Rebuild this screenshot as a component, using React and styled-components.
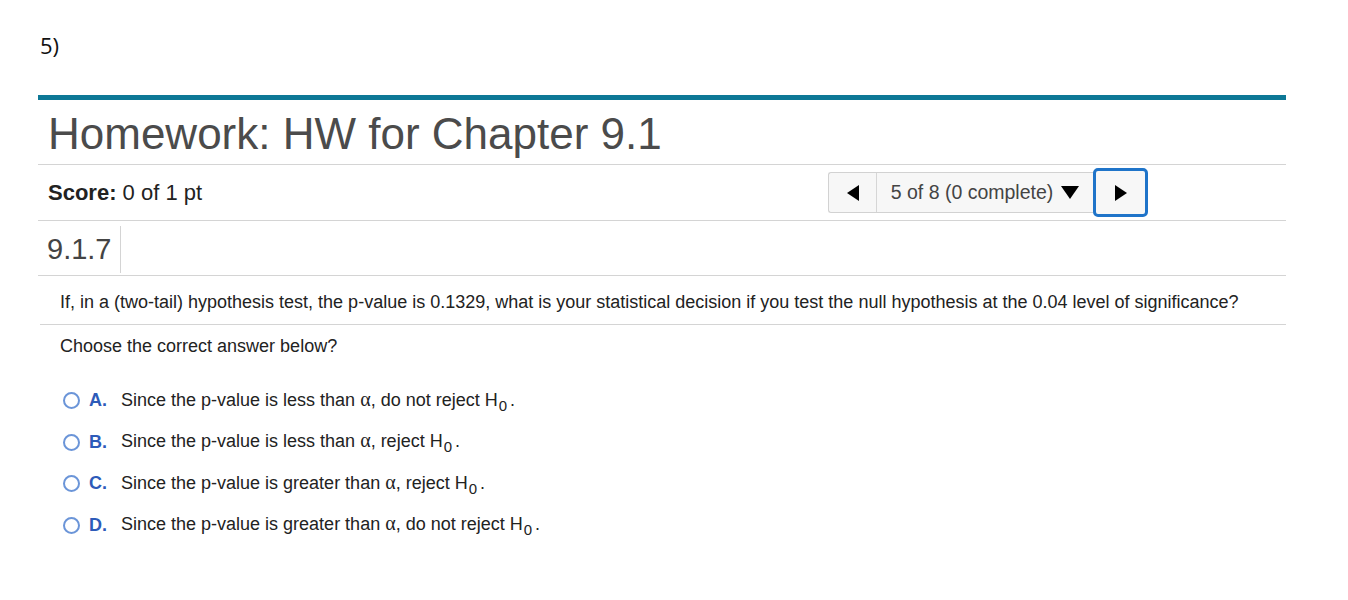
import styled, { createGlobalStyle } from "styled-components"

const GlobalStyle = createGlobalStyle`
  body {
    margin: 0;
    background: #fff;
    font-family: "Liberation Sans", Arial, sans-serif;
    color: #222;
  }
`

const Page = styled.div`
  width: 1348px;
  height: 600px;
  padding: 30px 0 0 38px;
  box-sizing: border-box;
`

const Number = styled.div`
  font-family: "Open Sans", sans-serif;
  font-size: 22px;
  color: #111;
  padding-left: 2px;
  height: 65px;
`

const Panel = styled.div`
  width: 1248px;
  border-top: 5px solid #0d7896;
`

const Title = styled.h1`
  margin: 0;
  font-weight: normal;
  font-size: 44px;
  color: #4b4b4b;
  padding: 5px 0 0 10px;
  height: 59px;
  line-height: 58px;
  border-bottom: 1px solid #d4d4d4;
`

const ScoreRow = styled.div`
  display: flex;
  align-items: center;
  justify-content: space-between;
  height: 55px;
  padding-left: 10px;
  border-bottom: 1px solid #d4d4d4;
  font-size: 22px;
  color: #222;
`

const Nav = styled.div`
  display: flex;
  align-items: center;
  margin-right: 138px;
  height: 41px;
`

const NavBox = styled.div`
  display: flex;
  height: 41px;
  border: 1px solid #d2d2d2;
  border-right: none;
  border-radius: 3px 0 0 3px;
  background: #f7f7f7;
  box-sizing: border-box;
`

const NavButton = styled.div`
  display: flex;
  align-items: center;
  justify-content: center;
  width: ${({ $w }) => $w}px;
  border-right: ${({ $sep }) => ($sep ? "1px solid #d6d6d6" : "none")};
  font-size: 19.5px;
  color: #444;
  gap: 8px;
`

const FocusButton = styled.div`
  display: flex;
  align-items: center;
  justify-content: center;
  width: 55px;
  height: 49px;
  box-sizing: border-box;
  border: 3px solid #1f74c9;
  border-radius: 5px;
  background: #f7f7f7;
`

const IdRow = styled.div`
  display: flex;
  height: 54px;
  border-bottom: 1px solid #d4d4d4;
  padding-left: 9px;
`

const IdText = styled.div`
  font-size: 29px;
  color: #444;
  display: flex;
  align-items: center;
  padding-right: 8px;
  margin: 5px 0 2px;
  border-right: 1px solid #d4d4d4;
`

const Question = styled.div`
  padding: 16px 0 0 20px;
  margin-left: 2px;
  height: 32px;
  font-size: 18px;
  color: #222;
  border-bottom: 1px solid #d4d4d4;
`

const Prompt = styled.div`
  padding: 11px 0 0 22px;
  font-size: 18px;
  color: #222;
  height: 54px;
`

const Options = styled.div`
  display: flex;
  flex-direction: column;
  gap: 20px;
  padding-left: 25px;
`

const Option = styled.div`
  display: flex;
  align-items: center;
  font-size: 18px;
  color: #222;
  height: 21.5px;
`

const Radio = styled.span`
  width: 13px;
  height: 13px;
  border: 2px solid #6b95d8;
  border-radius: 50%;
  margin-right: 9px;
  flex-shrink: 0;
`

const Letter = styled.span`
  font-weight: bold;
  color: #2d5bb9;
  width: 32px;
`

const Alpha = styled.span`
  font-family: "Liberation Serif", "Times New Roman", serif;
  font-size: 20px;
`

const Sub = styled.sub`
  font-size: 15px;
  vertical-align: -5px;
  margin: 0 3px 0 1px;
`

const Tri = ({ dir }) => {
  const pts = {
    left: "12,0 12,16 0,8",
    right: "0,0 0,16 12,8",
    down: "0,0 18,0 9,13",
  }
  const w = dir === "down" ? 18 : 12
  const h = dir === "down" ? 13 : 16
  return (
    <svg width={w} height={h} viewBox={`0 0 ${w} ${h}`}>
      <polygon points={pts[dir]} fill="#000" />
    </svg>
  )
}

const options = [
  { letter: "A.", head: "Since the p-value is less than ", tail: ", do not reject " },
  { letter: "B.", head: "Since the p-value is less than ", tail: ", reject " },
  { letter: "C.", head: "Since the p-value is greater than ", tail: ", reject " },
  { letter: "D.", head: "Since the p-value is greater than ", tail: ", do not reject " },
]

export default function App() {
  return (
    <>
      <GlobalStyle />
      <Page>
        <Number>5)</Number>
        <Panel>
          <Title>Homework: HW for Chapter 9.1</Title>
          <ScoreRow>
            <div>
              <b>Score:</b> 0 of 1 pt
            </div>
            <Nav>
              <NavBox>
                <NavButton $w={47} $sep>
                  <Tri dir="left" />
                </NavButton>
                <NavButton $w={216}>
                  5 of 8 (0 complete)
                  <Tri dir="down" />
                </NavButton>
              </NavBox>
              <FocusButton>
                <Tri dir="right" />
              </FocusButton>
            </Nav>
          </ScoreRow>
          <IdRow>
            <IdText>9.1.7</IdText>
          </IdRow>
          <Question>
            If, in a (two-tail) hypothesis test, the p-value is 0.1329, what is your statistical decision if you test the null hypothesis at the 0.04 level of significance?
          </Question>
          <Prompt>Choose the correct answer below?</Prompt>
          <Options>
            {options.map((o) => (
              <Option key={o.letter}>
                <Radio />
                <Letter>{o.letter}</Letter>
                <span>
                  {o.head}
                  <Alpha>α</Alpha>
                  {o.tail}H<Sub>0</Sub>.
                </span>
              </Option>
            ))}
          </Options>
        </Panel>
      </Page>
    </>
  )
}
